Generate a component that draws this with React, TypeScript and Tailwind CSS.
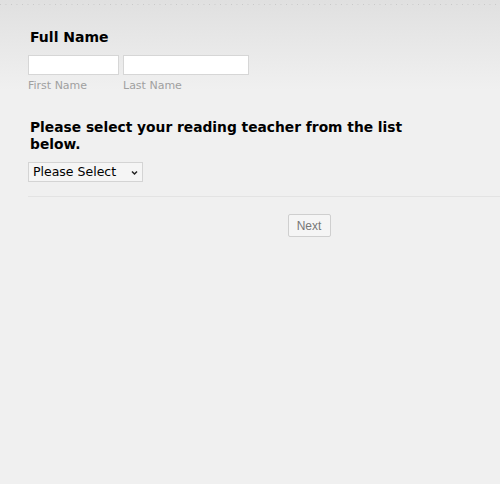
import React from "react";

export default function App() {
  return (
    <div className="w-[500px] h-[484px] bg-[#f0f0f0] relative overflow-hidden font-['DejaVu_Sans',sans-serif]">
      <div className="absolute inset-x-0 top-0 h-[90px] bg-[linear-gradient(to_bottom,#e0e0e0,#f0f0f0)]" />
      <div className="absolute inset-x-0 top-[4px] h-px bg-[linear-gradient(to_right,#c8c8c8_1px,transparent_1px)] bg-[length:5.5px_1px]" />
      <div className="relative pl-[28px] pt-[29px]">
        <div className="pl-[2px] text-[14px] font-bold text-black leading-[17px]">Full Name</div>
        <div className="flex gap-[4px] mt-[9px]">
          <div className="flex flex-col">
            <input className="w-[91px] h-[20px] bg-white border border-[#d6d6d6] outline-none" />
            <span className="text-[11px] text-[#a0a0a0] mt-[4px] leading-[13px]">First Name</span>
          </div>
          <div className="flex flex-col">
            <input className="w-[126px] h-[20px] bg-white border border-[#d6d6d6] outline-none" />
            <span className="text-[11px] text-[#a0a0a0] mt-[4px] leading-[13px]">Last Name</span>
          </div>
        </div>
        <div className="pl-[2px] mt-[27px] w-[396px] text-[13.8px] font-bold text-black leading-[17px]">
          Please select your reading teacher from the list below.
        </div>
        <div className="mt-[9px] w-[115px] h-[20px] border border-[#d4d4d4] bg-[#f5f5f5] flex items-center justify-between pl-[4px] pr-[4px]">
          <span className="text-[12.5px] text-black leading-none">Please Select</span>
          <svg width="7" height="6" viewBox="0 0 7 6" className="mt-[1px]">
            <path d="M1 1.5 L3.5 4 L6 1.5" stroke="#222" strokeWidth="1.5" fill="none" />
          </svg>
        </div>
        <div className="mt-[14px] h-px bg-[#e3e3e3]" />
        <div className="flex justify-center pt-[17px] pr-[28px]">
          <div className="ml-[118px] w-[43px] h-[23px] rounded-[2px] border border-[#cfcfcf] bg-[#f5f5f5] flex items-center justify-center text-[12px] text-[#777] font-['Liberation_Sans',sans-serif]">
            Next
          </div>
        </div>
      </div>
    </div>
  );
}
